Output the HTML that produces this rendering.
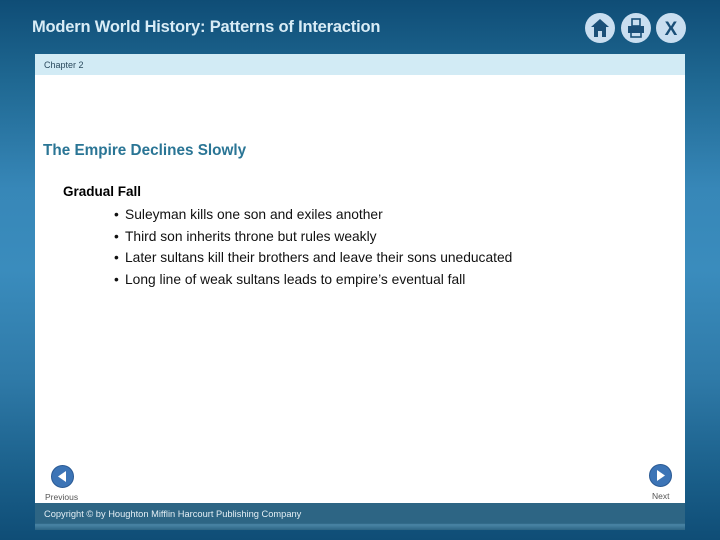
<!DOCTYPE html>
<html><head><meta charset="utf-8"><style>
*{margin:0;padding:0;box-sizing:border-box}
body{width:720px;height:540px;overflow:hidden;position:relative;font-family:"Liberation Sans",sans-serif;
background:linear-gradient(180deg,#0f4d76 0%,#1f6892 15%,#3787b8 35%,#3a8cbd 50%,#2f7aa8 70%,#1a5f8a 88%,#0f4d76 100%)}
.title{position:absolute;left:32px;top:18px;color:#d8ecf6;font-size:16.5px;font-weight:bold;letter-spacing:-0.2px}
.panel{position:absolute;left:35px;top:54px;width:650px;height:449px;background:#fff}
.chap{position:absolute;left:35px;top:54px;width:650px;height:21px;background:#d2ebf5;color:#2a4a5e;font-size:9px;padding:6px 0 0 9px}
.foot{position:absolute;left:35px;top:503px;width:650px;height:27px;background:linear-gradient(180deg,#2d6584 0%,#2d6584 75%,#4a85a6 80%,#2d6584 100%);color:#e4eff5;font-size:9.3px;padding:6px 0 0 9px}
h1{position:absolute;left:43px;top:142px;color:#2a7595;font-size:15.3px;font-weight:bold}
h2{position:absolute;left:63px;top:184px;color:#000;font-size:13.5px;font-weight:bold}
ul{position:absolute;left:114px;top:207px;list-style:none;font-size:13.8px;color:#111}
li{height:21.6px;position:relative;padding-left:11px;line-height:16px}
li:before{content:"•";position:absolute;left:0;top:0}
.ic{position:absolute;top:13px;width:30px;height:30px;border-radius:50%;background:#c9def0}
.nav{position:absolute;width:23px;height:23px;border-radius:50%;background:#3c74b6;border:1px solid #2a5a94}
.lbl{position:absolute;font-size:8.5px;color:#555}
</style></head><body>
<div class="title">Modern World History: Patterns of Interaction</div>
<div class="ic" style="left:585px"><svg width="30" height="30"><path d="M15 6 L6 14 L9 14 L9 24 L13 24 L13 18 L17 18 L17 24 L21 24 L21 14 L24 14 Z" fill="#1a4f78"/></svg></div>
<div class="ic" style="left:621px"><svg width="30" height="30"><rect x="11" y="6" width="8" height="7" fill="none" stroke="#1a4f78" stroke-width="1.6"/><rect x="7" y="13" width="16" height="7" fill="#1a4f78"/><rect x="10" y="19" width="10" height="5" fill="none" stroke="#1a4f78" stroke-width="1.6"/></svg></div>
<div class="ic" style="left:656px"><svg width="30" height="30"><text x="15" y="22" text-anchor="middle" font-family="Liberation Sans" font-weight="bold" font-size="19" fill="#1a4f78">X</text></svg></div>
<div class="panel"></div>
<div class="chap">Chapter 2</div>
<h1>The Empire Declines Slowly</h1>
<h2>Gradual Fall</h2>
<ul>
<li>Suleyman kills one son and exiles another</li>
<li>Third son inherits throne but rules weakly</li>
<li>Later sultans kill their brothers and leave their sons uneducated</li>
<li>Long line of weak sultans leads to empire’s eventual fall</li>
</ul>
<div class="nav" style="left:51px;top:465px"><svg width="21" height="21"><path d="M6 10.5 L14 5 L14 16 Z" fill="#fff"/></svg></div>
<div class="nav" style="left:649px;top:464px"><svg width="21" height="21"><path d="M15 10.5 L7 5 L7 16 Z" fill="#fff"/></svg></div>
<div class="lbl" style="left:45px;top:492px">Previous</div>
<div class="lbl" style="left:652px;top:491px">Next</div>
<div class="foot">Copyright © by Houghton Mifflin Harcourt Publishing Company</div>
</body></html>
